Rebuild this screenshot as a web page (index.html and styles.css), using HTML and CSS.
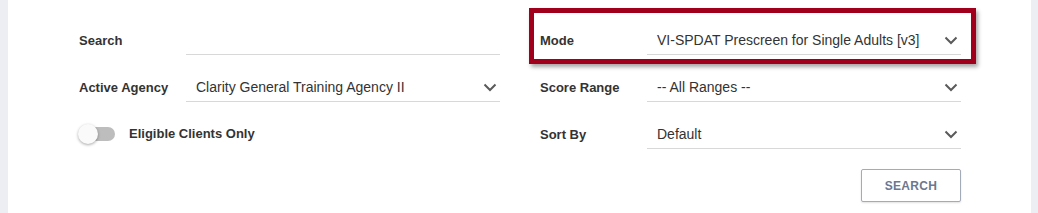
FILE: index.html
```html
<!DOCTYPE html>
<html lang="en">
<head>
<meta charset="utf-8">
<title>Search</title>
<link rel="stylesheet" href="styles.css">
</head>
<body>
<div class="panel">
  <div class="form">
    <div class="col">
      <div class="row">
        <label class="label" for="q">Search</label>
        <div class="field"><input id="q" class="input" type="text"></div>
      </div>
      <div class="row">
        <label class="label">Active Agency</label>
        <div class="field select">
          <span class="value">Clarity General Training Agency II</span>
          <svg class="chev" width="14" height="9" viewBox="0 0 14 9"><polyline points="1.5,1.5 7,7 12.5,1.5" fill="none" stroke="#5a5a5a" stroke-width="2"/></svg>
        </div>
      </div>
      <div class="row toggle-row">
        <span class="toggle"><span class="knob"></span></span>
        <span class="toggle-label">Eligible Clients Only</span>
      </div>
    </div>
    <div class="col">
      <div class="row highlighted">
        <label class="label">Mode</label>
        <div class="field select">
          <span class="value">VI-SPDAT Prescreen for Single Adults [v3]</span>
          <svg class="chev" width="14" height="9" viewBox="0 0 14 9"><polyline points="1.5,1.5 7,7 12.5,1.5" fill="none" stroke="#5a5a5a" stroke-width="2"/></svg>
        </div>
        <div class="highlight"></div>
      </div>
      <div class="row">
        <label class="label">Score Range</label>
        <div class="field select">
          <span class="value">-- All Ranges --</span>
          <svg class="chev" width="14" height="9" viewBox="0 0 14 9"><polyline points="1.5,1.5 7,7 12.5,1.5" fill="none" stroke="#5a5a5a" stroke-width="2"/></svg>
        </div>
      </div>
      <div class="row">
        <label class="label">Sort By</label>
        <div class="field select">
          <span class="value">Default</span>
          <svg class="chev" width="14" height="9" viewBox="0 0 14 9"><polyline points="1.5,1.5 7,7 12.5,1.5" fill="none" stroke="#5a5a5a" stroke-width="2"/></svg>
        </div>
      </div>
      <div class="actions">
        <button class="btn">SEARCH</button>
      </div>
    </div>
  </div>
</div>
</body>
</html>
```

FILE: styles.css
```css
html, body {
  margin: 0;
  padding: 0;
  height: 100%;
}
body {
  background: #eceef4;
  font-family: "Liberation Sans", Arial, Helvetica, sans-serif;
  color: #333;
  overflow: hidden;
}
.panel {
  margin: 0 7px 0 8px;
  height: 100%;
  background: #fff;
}
.form {
  display: grid;
  grid-template-columns: 421px 421px;
  column-gap: 40px;
  padding: 8px 0 0 71px;
}
.col {
  display: flex;
  flex-direction: column;
}
.row {
  display: flex;
  align-items: baseline;
  height: 47px;
}
.highlighted {
  position: relative;
}
.label {
  width: 107px;
  flex: none;
  font-size: 13px;
  font-weight: bold;
  color: #333;
  line-height: 16px;
}
.field {
  box-sizing: border-box;
  width: 314px;
  height: 47px;
  display: flex;
  align-items: flex-end;
  padding: 0 3px 6px 10px;
  border-bottom: 1px solid #d8d8d8;
  position: relative;
}
.value {
  font-size: 14px;
  line-height: 16px;
  color: #333;
  flex: 1;
}
.input {
  flex: 1;
  min-width: 0;
  height: 16px;
  margin: 0;
  padding: 0;
  border: 0;
  outline: none;
  background: transparent;
  font-family: "Liberation Sans", Arial, sans-serif;
  font-size: 14px;
  line-height: 16px;
  color: #333;
}
.chev {
  position: absolute;
  right: 3px;
  bottom: 9px;
}
.toggle-row {
  align-items: center;
  padding-top: 16px;
  box-sizing: border-box;
}
.toggle {
  position: relative;
  width: 36px;
  height: 14px;
  border-radius: 7px;
  background: #bdbdbd;
  margin-right: 14px;
  flex: none;
}
.knob {
  position: absolute;
  left: -1px;
  top: -3px;
  width: 20px;
  height: 20px;
  border-radius: 50%;
  background: #fafafa;
  box-shadow: 0 1px 3px rgba(0,0,0,0.35);
}
.toggle-label {
  font-size: 13px;
  font-weight: bold;
  color: #333;
  line-height: 16px;
}
.highlight {
  position: absolute;
  left: -11px;
  top: 0;
  width: 447px;
  height: 56px;
  box-sizing: border-box;
  border: 5px solid #a0001c;
  box-shadow: 2px 3px 4px rgba(0,0,0,0.35);
  pointer-events: none;
}
.actions {
  display: flex;
  justify-content: flex-end;
  margin-top: 20px;
}
.btn {
  width: 100px;
  height: 33px;
  box-sizing: border-box;
  background: #fff;
  border: 1px solid #a3abb8;
  border-radius: 2px;
  box-shadow: 0 1px 2px rgba(0,0,0,0.12);
  font-family: "Liberation Sans", Arial, sans-serif;
  font-size: 12px;
  font-weight: bold;
  letter-spacing: 0.3px;
  color: #6b7890;
  padding: 0;
}
```
